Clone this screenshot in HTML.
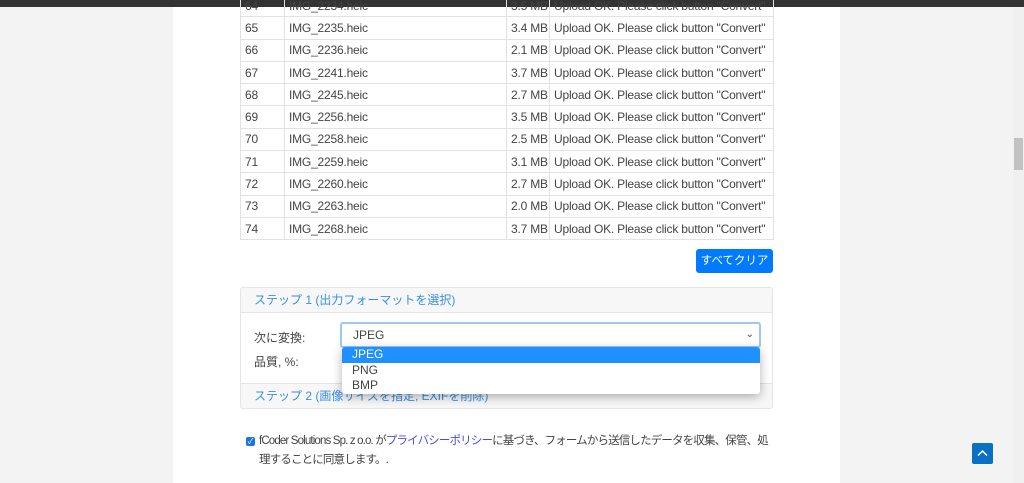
<!DOCTYPE html>
<html><head><meta charset="utf-8"><style>
*{box-sizing:border-box;margin:0;padding:0}
body{width:1024px;height:483px;overflow:hidden;background:#f3f3f3;position:relative;font-family:"Liberation Sans","Noto Sans CJK JP",sans-serif;color:#444;font-size:12px}
.top{position:absolute;left:0;top:0;width:1024px;height:7px;background:#333}
.main{position:absolute;left:173px;top:7px;width:667px;height:476px;background:#fff}
table{position:absolute;left:240px;top:-6px;width:533px;border-collapse:collapse;table-layout:fixed}
td{border:1px solid #e2e2e2;height:22.3px;padding:0 4px;white-space:nowrap;overflow:hidden;color:#444;font-size:12px;letter-spacing:-0.2px}
.btn{position:absolute;left:696px;top:249px;width:77px;height:24px;background:#007bff;color:#fff;border-radius:3px;font-size:11.5px;text-align:center;line-height:24px}
.card{position:absolute;left:240px;top:287px;width:533px;height:122px;border:1px solid #e4e4e4;border-radius:3px;background:#fff;overflow:hidden}
.h{position:absolute;left:0;width:531px;height:25px;background:#f7f7f7;color:#3a8ee6;padding-left:13px;line-height:24px;font-size:12px}
.lbl{position:absolute;left:13px;font-size:12px;color:#444}
.sel{position:absolute;left:340px;top:322px;width:421px;height:26px;border:2px solid #9cc8f5;border-radius:3px;background:#fff;padding-left:11px;line-height:22px;font-size:12px}
.sel span{position:absolute;right:5px;top:0;font-size:10px}
.dd{position:absolute;left:342px;top:347px;width:418px;height:47px;background:#fff;border-radius:3px;box-shadow:0 3px 10px rgba(0,0,0,.3);overflow:hidden;font-size:12px}
.dd div{height:15.5px;line-height:15.5px;padding-left:10px}
.up{position:absolute;left:972px;top:443px;width:21px;height:21px;background:#0a70c4;border-radius:2px}
.sb{position:absolute;left:1013px;top:7px;width:11px;height:476px;background:#f0f0f0}
.ag{position:absolute;left:259px;font-size:11.5px;line-height:19px;color:#444;white-space:nowrap;letter-spacing:-0.85px}
</style></head><body>
<div class="top"></div>
<div class="main"></div>
<table>
<colgroup><col style="width:44px"><col style="width:222px"><col style="width:43px"><col style="width:224px"></colgroup>
<tr><td>64</td><td>IMG_2234.heic</td><td>3.5 MB</td><td>Upload OK. Please click button "Convert"</td></tr>
<tr><td>65</td><td>IMG_2235.heic</td><td>3.4 MB</td><td>Upload OK. Please click button "Convert"</td></tr>
<tr><td>66</td><td>IMG_2236.heic</td><td>2.1 MB</td><td>Upload OK. Please click button "Convert"</td></tr>
<tr><td>67</td><td>IMG_2241.heic</td><td>3.7 MB</td><td>Upload OK. Please click button "Convert"</td></tr>
<tr><td>68</td><td>IMG_2245.heic</td><td>2.7 MB</td><td>Upload OK. Please click button "Convert"</td></tr>
<tr><td>69</td><td>IMG_2256.heic</td><td>3.5 MB</td><td>Upload OK. Please click button "Convert"</td></tr>
<tr><td>70</td><td>IMG_2258.heic</td><td>2.5 MB</td><td>Upload OK. Please click button "Convert"</td></tr>
<tr><td>71</td><td>IMG_2259.heic</td><td>3.1 MB</td><td>Upload OK. Please click button "Convert"</td></tr>
<tr><td>72</td><td>IMG_2260.heic</td><td>2.7 MB</td><td>Upload OK. Please click button "Convert"</td></tr>
<tr><td>73</td><td>IMG_2263.heic</td><td>2.0 MB</td><td>Upload OK. Please click button "Convert"</td></tr>
<tr><td>74</td><td>IMG_2268.heic</td><td>3.7 MB</td><td>Upload OK. Please click button "Convert"</td></tr>
</table>
<div class="btn">すべてクリア</div>
<div class="card">
<div class="h" style="top:0;border-bottom:1px solid #e4e4e4">ステップ 1 (出力フォーマットを選択)</div>
<div class="lbl" style="top:41px">次に変換:</div>
<div class="lbl" style="top:65px">品質, %:</div>
<div class="h" style="top:95px;height:26px;border-top:1px solid #e4e4e4">ステップ 2 (画像サイズを指定, EXIFを削除)</div>
</div>
<div class="sel">JPEG<span>⌄</span></div>
<div class="dd"><div style="background:#1e90ff;color:#fff">JPEG</div><div>PNG</div><div>BMP</div></div>
<div style="position:absolute;left:246px;top:437px;width:9px;height:9px;background:#1a73e8;border-radius:2px;color:#fff;font-size:8px;line-height:9px;text-align:center">✓</div>
<div class="ag" style="top:432px">fCoder Solutions Sp. z o.o. が<span style="color:#4a4ae6">プライバシーポリシー</span>に基づき、フォームから送信したデータを収集、保管、処</div>
<div class="ag" style="top:451px">理することに同意します。.</div>
<div class="up"><svg width="21" height="21"><path d="M6 12.5 L10.5 8 L15 12.5" stroke="#fff" stroke-width="1.5" fill="none"/></svg></div>
<div class="sb"><div style="position:absolute;left:1px;top:131px;width:9px;height:32px;background:#c2c2c2"></div></div>
</body></html>
